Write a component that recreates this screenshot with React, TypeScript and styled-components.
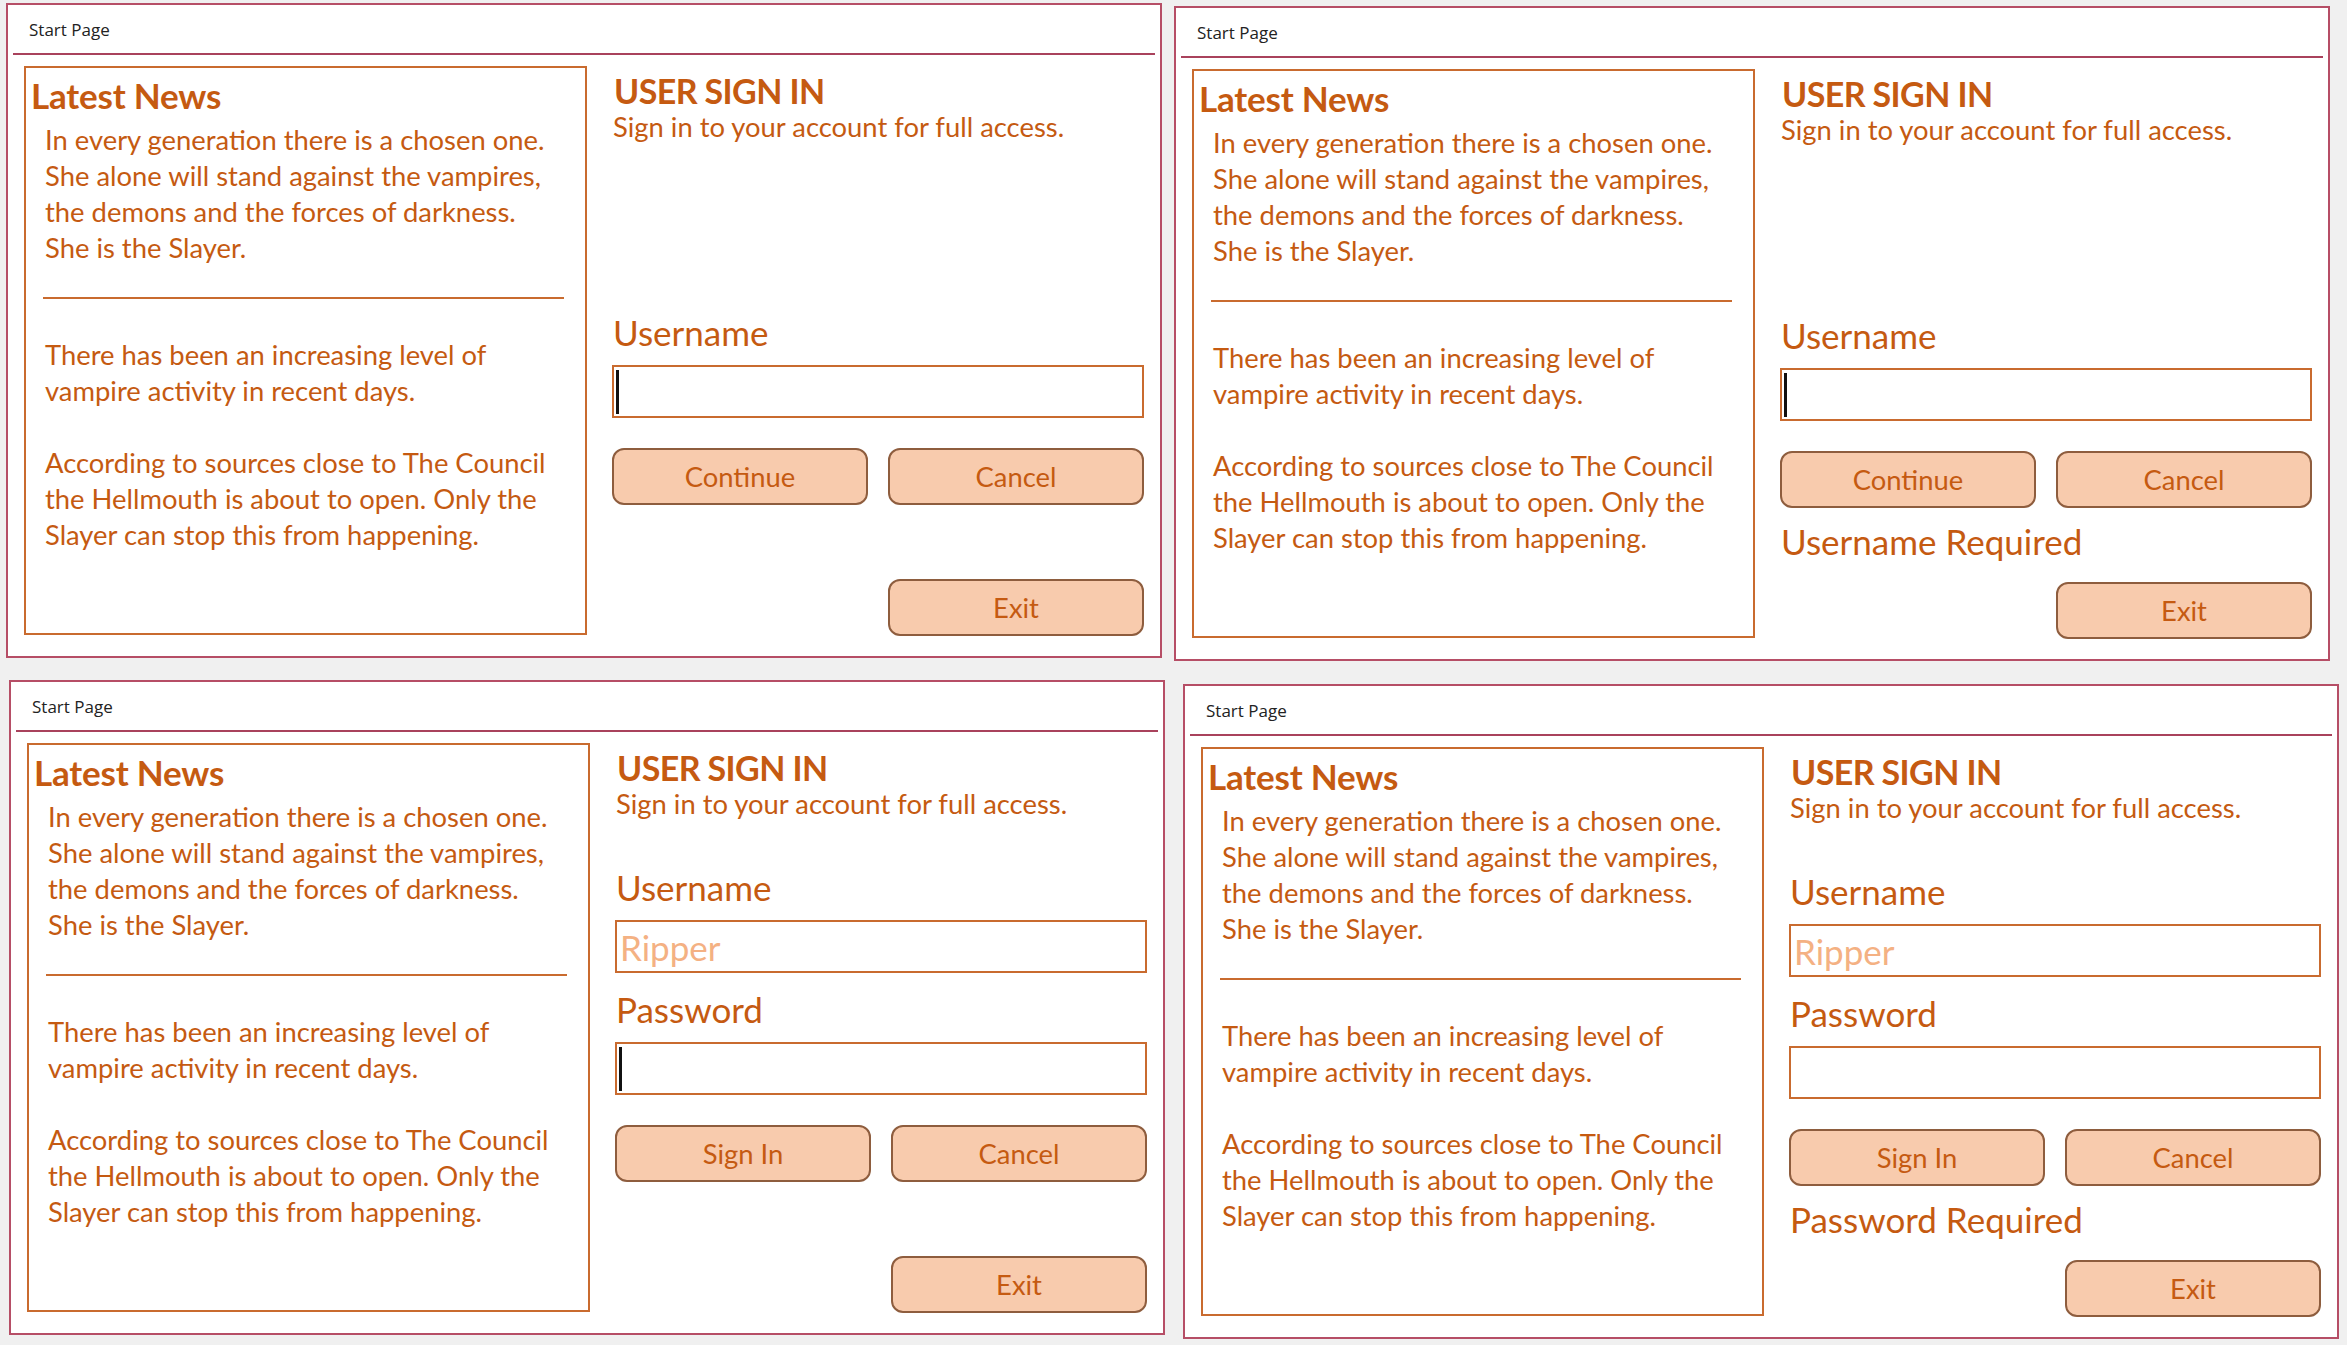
import React from "react";
import styled, { createGlobalStyle } from "styled-components";

const Global = createGlobalStyle`
  html, body {
    margin: 0;
    padding: 0;
    background: #f0f0f0;
  }
  body {
    width: 2347px;
    height: 1345px;
    overflow: hidden;
    font-family: Lato, "Open Sans", sans-serif;
  }
  * { box-sizing: border-box; }
`;

const ORANGE = "#c55a11";
const BOX_ORANGE = "#c96b2f";

const Canvas = styled.div`
  display: flex;
  flex-direction: column;
  width: 2347px;
  height: 1345px;
`;

const Row = styled.div`
  display: flex;
  align-items: flex-start;
`;

const Panel = styled.section<{ $dx: number; $dy: number }>`
  margin: ${(p) => p.$dy}px 0 0 ${(p) => p.$dx}px;
  width: 1156px;
  height: 655px;
  background: #ffffff;
  border: 2px solid #b64e66;
  display: flex;
  flex-direction: column;
`;

const TitleBar = styled.header`
  height: 50px;
  margin: 0 5px;
  padding-left: 16px;
  border-bottom: 2px solid #a9425c;
  display: flex;
  align-items: center;
  font-family: "Open Sans", "Noto Sans", sans-serif;
  font-size: 17px;
  color: #222;
  flex: none;
`;

const Body = styled.div`
  display: flex;
  gap: 25px;
  padding: 11px 16px 0 16px;
`;

const NewsBox = styled.div`
  width: 563px;
  height: 569px;
  border: 2px solid ${BOX_ORANGE};
  display: flex;
  flex-direction: column;
  color: ${ORANGE};
`;

const NewsHeading = styled.h2`
  margin: 5px 0 0 5px;
  font-family: Lato, sans-serif;
  font-weight: 700;
  font-size: 35px;
  letter-spacing: -0.2px;
  line-height: 45px;
  color: ${ORANGE};
`;

const Para = styled.div<{ $mt: number }>`
  margin-top: ${(p) => p.$mt}px;
  padding-left: 19px;
  font-size: 27.4px;
  line-height: 36px;
  color: ${ORANGE};
`;

const Line = styled.div`
  white-space: nowrap;
`;

const Rule = styled.hr`
  margin: 31px 0 0 17px;
  width: 521px;
  border: none;
  border-top: 2px solid ${BOX_ORANGE};
  height: 0;
`;

const SignIn = styled.div`
  width: 532px;
  height: 570px;
  display: flex;
  flex-direction: column;
  color: ${ORANGE};
`;

const SignHeading = styled.h2`
  margin: 4px 0 0 2px;
  font-weight: 700;
  font-size: 34px;
  letter-spacing: -0.6px;
  line-height: 42px;
  color: ${ORANGE};
`;

const SubTitle = styled.div`
  margin: -3px 0 0 1px;
  font-size: 27.4px;
  line-height: 36px;
`;

const Spacer = styled.div`
  flex: 1;
`;

const Fields = styled.div`
  display: flex;
  flex-direction: column;
  gap: 14px;
`;

const Field = styled.div`
  display: flex;
  flex-direction: column;
`;

const Label = styled.div`
  font-size: 35px;
  line-height: 45px;
  margin: 0 0 10px 1px;
`;

const InputBox = styled.div`
  height: 53px;
  border: 2px solid ${BOX_ORANGE};
  background: #fff;
  display: flex;
  align-items: center;
  padding-left: 2px;
`;

const Caret = styled.span`
  width: 3px;
  height: 44px;
  background: #111;
`;

const Placeholder = styled.span`
  font-size: 35px;
  color: #f4b183;
  padding-left: 1px;
`;

const Buttons = styled.div`
  margin-top: 30px;
  display: flex;
  gap: 20px;
`;

const Button = styled.button`
  flex: 1;
  height: 57px;
  border: 2px solid #8e5d3e;
  border-radius: 12px;
  background: #f8cbad;
  color: ${ORANGE};
  font-family: Lato, sans-serif;
  font-size: 27.4px;
  padding: 0;
`;

const ExitButton = styled(Button)`
  flex: none;
  width: 256px;
  align-self: flex-end;
`;

const Message = styled.div`
  height: 74px;
  display: flex;
  align-items: center;
  font-size: 35px;
  padding: 0 0 9px 1px;
`;

type FieldDef = { label: string; placeholder?: string; caret?: boolean };
type PanelDef = {
  dx: number;
  dy: number;
  fields: FieldDef[];
  primary: string;
  message: string;
};

const rows: PanelDef[][] = [
  [
    { dx: 6, dy: 3, fields: [{ label: "Username", caret: true }], primary: "Continue", message: "" },
    {
      dx: 12,
      dy: 6,
      fields: [{ label: "Username", caret: true }],
      primary: "Continue",
      message: "Username Required",
    },
  ],
  [
    {
      dx: 9,
      dy: 19,
      fields: [
        { label: "Username", placeholder: "Ripper" },
        { label: "Password", caret: true },
      ],
      primary: "Sign In",
      message: "",
    },
    {
      dx: 18,
      dy: 23,
      fields: [
        { label: "Username", placeholder: "Ripper" },
        { label: "Password" },
      ],
      primary: "Sign In",
      message: "Password Required",
    },
  ],
];

function News() {
  return (
    <NewsBox>
      <NewsHeading>Latest News</NewsHeading>
      <Para $mt={4}>
        <Line>In every generation there is a chosen one.</Line>
        <Line>She alone will stand against the vampires,</Line>
        <Line>the demons and the forces of darkness.</Line>
        <Line>She is the Slayer.</Line>
      </Para>
      <Rule />
      <Para $mt={38}>
        <Line>There has been an increasing level of</Line>
        <Line>vampire activity in recent days.</Line>
      </Para>
      <Para $mt={36}>
        <Line>According to sources close to The Council</Line>
        <Line>the Hellmouth is about to open. Only the</Line>
        <Line>Slayer can stop this from happening.</Line>
      </Para>
    </NewsBox>
  );
}

function StartPage({ def }: { def: PanelDef }) {
  return (
    <Panel $dx={def.dx} $dy={def.dy}>
      <TitleBar>Start Page</TitleBar>
      <Body>
        <News />
        <SignIn>
          <SignHeading>USER SIGN IN</SignHeading>
          <SubTitle>Sign in to your account for full access.</SubTitle>
          <Spacer />
          <Fields>
            {def.fields.map((f) => (
              <Field key={f.label}>
                <Label>{f.label}</Label>
                <InputBox>
                  {f.caret && <Caret />}
                  {f.placeholder && <Placeholder>{f.placeholder}</Placeholder>}
                </InputBox>
              </Field>
            ))}
          </Fields>
          <Buttons>
            <Button>{def.primary}</Button>
            <Button>Cancel</Button>
          </Buttons>
          <Message>{def.message}</Message>
          <ExitButton>Exit</ExitButton>
        </SignIn>
      </Body>
    </Panel>
  );
}

export default function App() {
  return (
    <>
      <Global />
      <Canvas>
        {rows.map((row, i) => (
          <Row key={i}>
            {row.map((p, j) => (
              <StartPage key={j} def={p} />
            ))}
          </Row>
        ))}
      </Canvas>
    </>
  );
}
